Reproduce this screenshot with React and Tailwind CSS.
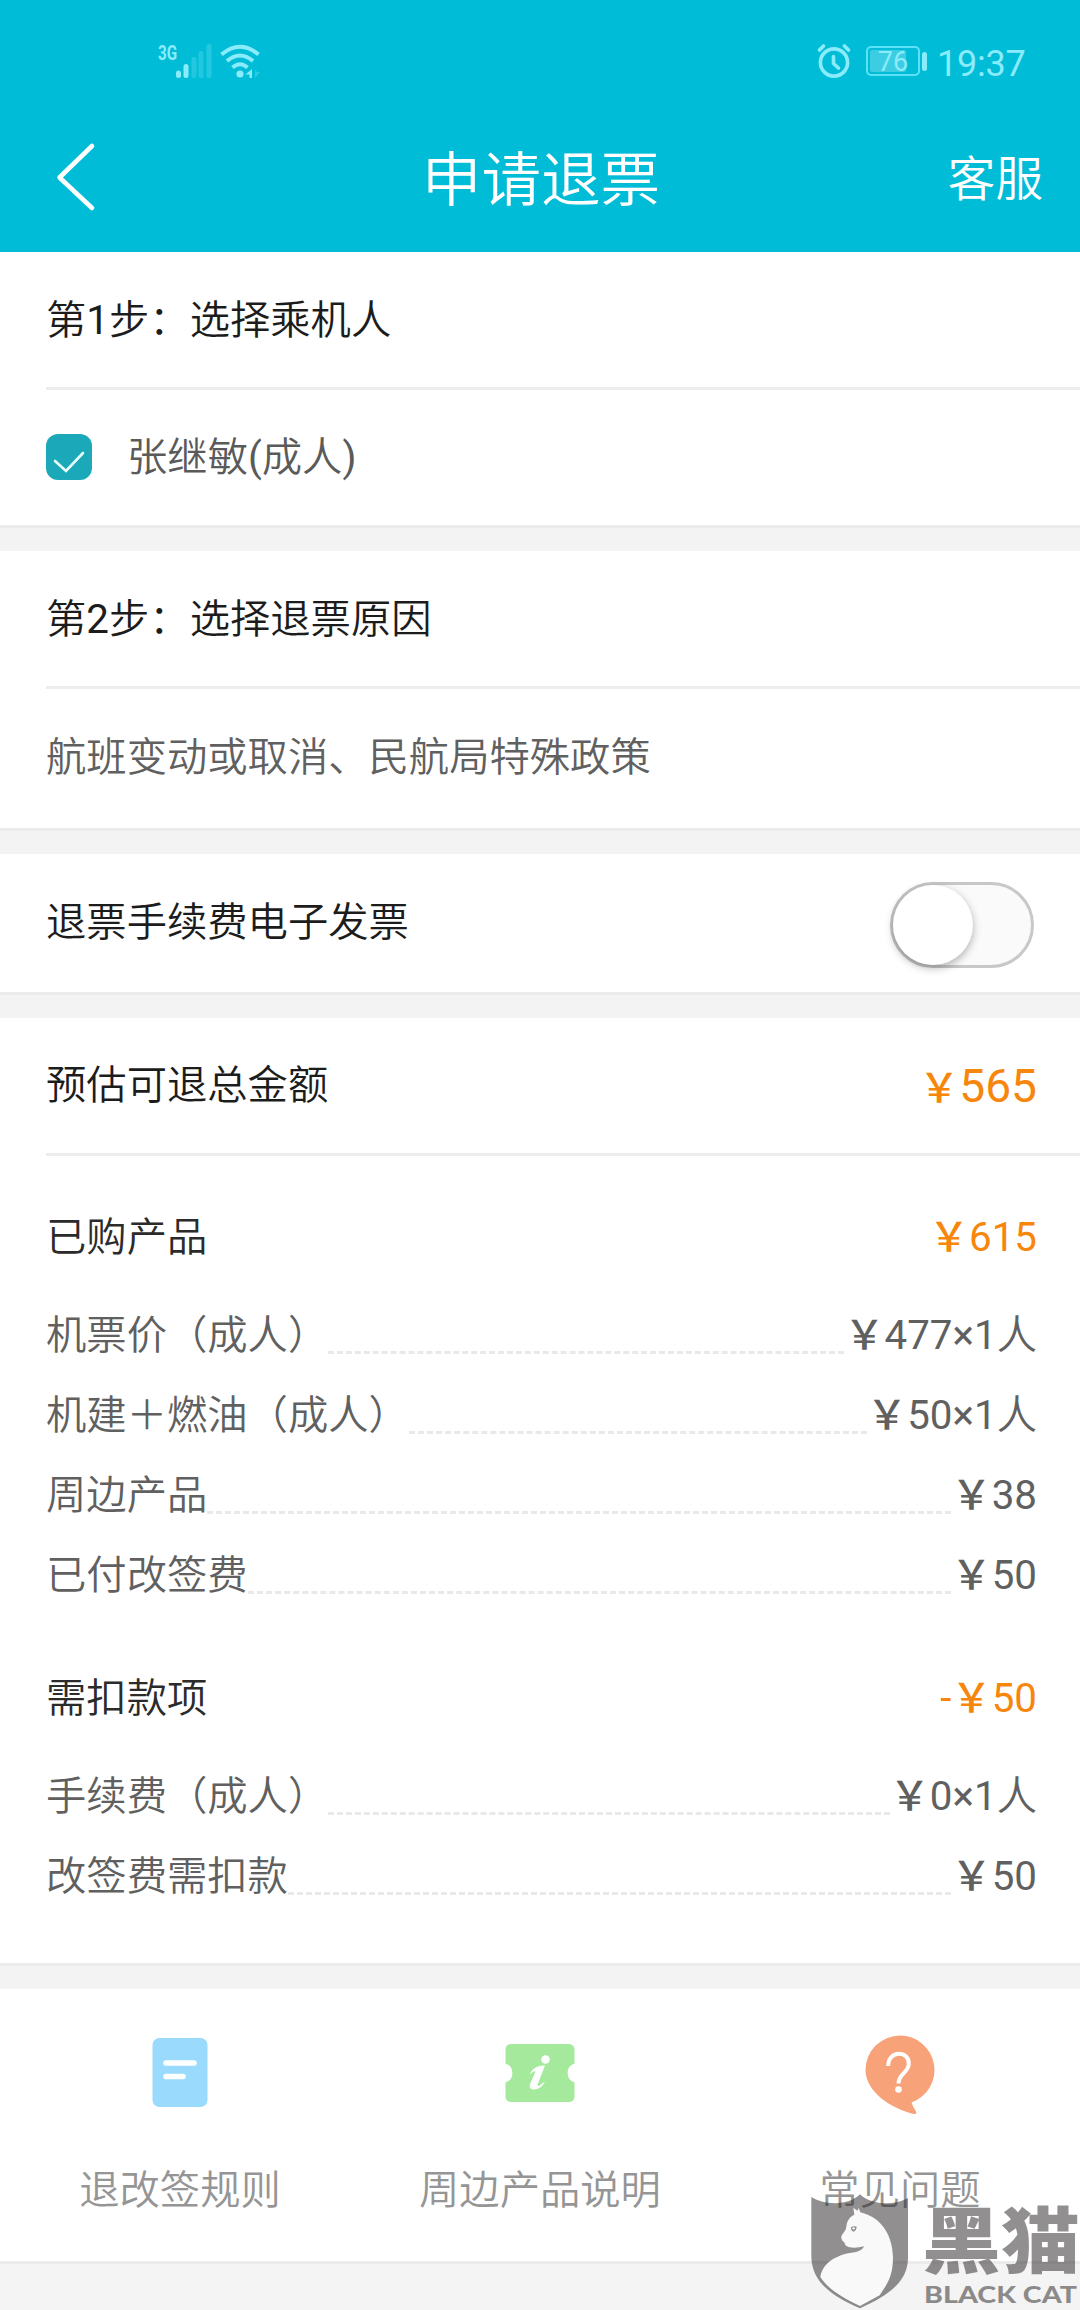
const boughtItems = [
  { label: '机票价（成人）', price: '477×1', unit: '人' },
  { label: '机建＋燃油（成人）', price: '50×1', unit: '人' },
  { label: '周边产品', price: '38' },
  { label: '已付改签费', price: '50' },
];

const deductItems = [
  { label: '手续费（成人）', price: '0×1', unit: '人' },
  { label: '改签费需扣款', price: '50' },
];

function StatusBar() {
  return (
    <div className="flex h-[78px] items-end justify-between pl-[158px] pr-[54px] font-normal text-[#8aecfb]">
      <div className="flex items-end">
        <span className="mb-[13px] w-[18px] origin-left scale-x-[0.76] text-[20px] font-bold leading-[24px]">3G</span>
        <svg width="36" height="34" viewBox="18 0 36 34" fill="currentColor">
          <rect x="18" y="26.5" width="5" height="7.5" rx="2.5" />
          <rect x="25.5" y="20" width="5" height="14" rx="2.5" />
          <g opacity="0.25">
            <rect x="33.5" y="13" width="5" height="21" rx="2" />
            <rect x="40.5" y="7" width="5" height="27" rx="2" />
            <rect x="48.5" y="0" width="5" height="34" rx="2" />
          </g>
        </svg>
        <svg className="ml-2" width="40" height="34" viewBox="0 0 40 34" fill="none" stroke="currentColor" strokeWidth="4">
          <path d="M1.5 10.5Q20-5 38.5 10.5" />
          <path d="M7 17Q20 6 33 17" />
          <path d="M12.5 23.5Q20 17 27.5 23.5" />
          <circle cx="20" cy="30" r="3.6" fill="currentColor" stroke="none" />
          <path d="M32 25v9h-2.500v-3.500h-4z" fill="currentColor" stroke="none" />
          <path d="M35 25v9l5-6h-3z" fill="currentColor" stroke="none" opacity="0.3" />
        </svg>
      </div>
      <div className="flex items-end">
        <svg width="34" height="34" viewBox="0 0 34 34" fill="none" stroke="currentColor" strokeWidth="3.6" strokeLinecap="round" strokeLinejoin="round">
          <circle cx="17" cy="18.5" r="13.6" />
          <path d="M16.5 12.5v7l5 4.5M2.5 6l4-4M31.5 6l-4-4" />
        </svg>
        <div className="relative ml-[15px] mb-0.5 h-[30px] w-[54px] rounded-[5px] border-2 border-[#5ce2f6] p-0.5">
          <div className="h-full w-[36px] rounded-[2px] bg-[#3ccde2]" />
          <span className="absolute inset-0 text-center text-[27px] leading-[28px]">76</span>
        </div>
        <div className="mb-[7px] ml-0.5 h-[19px] w-[5px] rounded-sm bg-current" />
        <span className="ml-2.5 h-[34px] w-[89px] whitespace-nowrap text-[36px] leading-[40px] tracking-[-0.2px]">19:37</span>
      </div>
    </div>
  );
}

function Header() {
  return (
    <header className="h-[252px] bg-[#00bcd7]">
      <StatusBar />
      <div className="grid h-[174px] grid-cols-3 pl-[55px] pr-[37px] text-white">
        <svg className="mt-16" width="60" height="70" viewBox="0 0 60 70" fill="none" stroke="currentColor" strokeWidth="4.6" strokeLinecap="round" strokeLinejoin="round">
          <path d="M37 4L4.500 35.500L37 66" />
        </svg>
        <h1 className="mt-[67px] -ml-4 text-center text-[59.6px] font-[350] leading-[72px]">申请退票</h1>
        <span className="mt-[67px] justify-self-end whitespace-nowrap text-[47.6px] leading-[70px]">客服</span>
      </div>
    </header>
  );
}

function Gap() {
  return <div className="h-[26px] border-t-[3px] border-[#ebebeb] bg-[#f3f3f3]" />;
}

function StepTitle({ step, children }) {
  return (
    <div className="flex h-[138px] items-center border-b-[3px] border-[#ededed] pt-0.5">
      <span>
        第<span className="font-normal">{step}</span>步：{children}
      </span>
    </div>
  );
}

function Price({ children, className = '', prefix, unit }) {
  return (
    <span className={className}>
      <span className="font-normal">{prefix}</span>
      <span className="text-[40.32px] font-medium">￥</span>
      <span className="font-normal">{children}</span>
      {unit}
    </span>
  );
}

function FeeGroup({ title, total, prefix, items }) {
  return (
    <div className="pl-[46px] pr-[43px]">
      <div className="mb-[18px] flex h-20 items-center justify-between pt-[3px] text-[#2b2b2b]">
        <span>{title}</span>
        <Price className="text-[#f7860c]" prefix={prefix}>{total}</Price>
      </div>
      {items.map((item) => (
        <div key={item.label} className="flex h-20 items-center pt-1 text-[#606060]">
          <span>{item.label}</span>
          <span className="mb-[20px] flex-1 self-end border-b-[3px] border-dashed border-[#e9e9e9]" />
          <Price unit={item.unit}>{item.price}</Price>
        </div>
      ))}
    </div>
  );
}

function RulesIcon() {
  return (
    <svg width="56" height="80" viewBox="0 0 56 80">
      <rect x="0.500" y="3" width="55" height="69" rx="7" fill="#9adbfd" />
      <path d="M14 28h28M14 41.500h17" stroke="#fff" strokeWidth="5.500" strokeLinecap="round" />
    </svg>
  );
}

function TicketIcon() {
  return (
    <svg width="70" height="80" viewBox="0 0 70 80">
      <path
        d="M6 9h58a5.500 5.500 0 0 1 5.500 5.500V28.500a10 10 0 0 0 0 19V61.500A5.500 5.500 0 0 1 64 67H6a5.500 5.500 0 0 1-5.500-5.500V47.500a10 10 0 0 0 0-19V14.500A5.500 5.500 0 0 1 6 9z"
        fill="#a5e99c"
      />
      <circle cx="40.500" cy="24.500" r="4.300" fill="#fff" />
      <path
        d="M25 38.500C29 31.500 34 30.500 40 30.500L33 48.500C32.200 51 33.500 51.500 35 50.300L40 46.500C38 51 33.500 54.700 28.500 54.500C24.500 54.300 24 51.500 25.500 48L30.500 36.500C29 36 27.500 37 26 39z"
        fill="#fff"
      />
    </svg>
  );
}

function QuestionIcon() {
  return (
    <svg width="70" height="80" viewBox="0 0 70 80">
      <path
        d="M35 0.500A34.500 34.500 0 0 1 46.500 67.500Q47.500 71 51 76.500Q52 79.500 49 79C27 74 0.500 57 0.500 35A34.500 34.500 0 0 1 35 0.500z"
        fill="#f7a278"
      />
      <path d="M23.200 31C23.200 14.500 44.500 15.500 43.800 29C43.300 38 33.500 38.500 33.500 48.500" fill="none" stroke="#fff" strokeWidth="4" />
      <circle cx="33.500" cy="54.500" r="3.300" fill="#fff" />
    </svg>
  );
}

function Watermark() {
  return (
    <div className="absolute bottom-0 right-0 flex h-[116px] w-[270px] text-[#231f20]/50">
      <svg width="100" height="115" viewBox="90 584 300 345">
        <path
          fill="currentColor"
          d="M94 593C125 613 200 625 240 585C275 620 345 618 384 596V775C384 850 320 890 240 927C160 892 94 850 94 770z"
        />
        <path
          fill="#fff"
          fillOpacity="0.95"
          d="M220 625L232 634L236 626L241 639C310 655 338 715 339 775C339 830 321 855 299 888L240 920C190 897 145 870 121 833C128 785 180 763 228 758C240 755 249 750 252 741C228 748 202 746 195 736C196 728 186 727 184 716C182 705 197 699 199 682C201 661 211 652 223 646z"
        />
        <path fill="currentColor" d="M213 684Q222 678 230 682Q229 694 220 697Q213 695 213 684z" />
        <circle cx="221" cy="687" r="3.500" fill="#fff" />
      </svg>
      <svg className="ml-[14px] overflow-visible" width="156" height="116" viewBox="0 0 156 116" fill="currentColor">
        <text
          x="-2"
          y="73"
          fontFamily="Noto Sans CJK SC, sans-serif"
          fontSize="72"
          fontWeight="900"
          textLength="158"
          lengthAdjust="spacingAndGlyphs"
        >
          黑猫
        </text>
        <text
          x="0"
          y="108.500"
          fontFamily="Lato, sans-serif"
          fontSize="23"
          fontWeight="900"
          textLength="153"
          lengthAdjust="spacingAndGlyphs"
        >
          BLACK CAT
        </text>
      </svg>
    </div>
  );
}

export default function App() {
  return (
    <div
      lang="zh-CN"
      className="relative h-[2310px] w-[1080px] overflow-hidden bg-[#f4f4f4] font-[Roboto,'Noto_Sans_CJK_SC',sans-serif] text-[40.32px] font-[350] leading-[60px] text-[#1c1c1c]"
    >
      <Header />

      <section className="bg-white pl-[46px]">
        <StepTitle step="1">选择乘机人</StepTitle>
        <div className="flex h-[135px] items-center text-[#5a5a5a]">
          <span className="-mt-0.5 flex h-[46px] w-[46px] items-center justify-center rounded-xl bg-[#1ba9ba]">
            <svg width="46" height="46" viewBox="0 0 46 46" fill="none" stroke="#e9ffff" strokeWidth="2.600" strokeLinecap="round">
              <path d="M9 27L20 37L37 19" />
            </svg>
          </span>
          <span className="ml-[35px]">
            张继敏<span className="font-normal">(</span>成人<span className="font-normal">)</span>
          </span>
        </div>
      </section>
      <Gap />

      <section className="bg-white pl-[46px]">
        <StepTitle step="2">选择退票原因</StepTitle>
        <div className="flex h-[139px] items-center pb-0.5 text-[#606060]">航班变动或取消、民航局特殊政策</div>
      </section>
      <Gap />

      <section className="flex h-[138px] items-center justify-between bg-white pl-[46px] pr-[46px]">
        <span>退票手续费电子发票</span>
        <span className="mt-1 h-[86px] w-[144px] rounded-full border-[3px] border-[#c8c8c8] bg-[#fafafa]">
          <span className="block h-20 w-20 rounded-full bg-white shadow-[0_3px_9px_rgba(0,0,0,0.3)]" />
        </span>
      </section>
      <Gap />

      <section className="h-[945px] bg-white">
        <div className="ml-[46px] flex h-[138px] items-center justify-between border-b-[3px] border-[#ededed] pt-px pr-[43px]">
          <span>预估可退总金额</span>
          <Price className="pt-0.5 text-[46.08px] text-[#f7860c]">565</Price>
        </div>
        <div className="flex flex-col gap-[43px] pt-10">
          <FeeGroup title="已购产品" total="615" items={boughtItems} />
          <FeeGroup title="需扣款项" total="50" prefix="-" items={deductItems} />
        </div>
      </section>
      <Gap />

      <nav className="grid h-[272px] grid-cols-3 bg-white pt-[46px] text-[#959595]">
        <div className="flex flex-col items-center gap-[46px]">
          <RulesIcon />
          <span>退改签规则</span>
        </div>
        <div className="flex flex-col items-center gap-[46px]">
          <TicketIcon />
          <span>周边产品说明</span>
        </div>
        <div className="flex flex-col items-center gap-[46px]">
          <QuestionIcon />
          <span>常见问题</span>
        </div>
      </nav>
      <div className="border-t-[3px] border-[#ebebeb]" />

      <Watermark />
    </div>
  );
}
